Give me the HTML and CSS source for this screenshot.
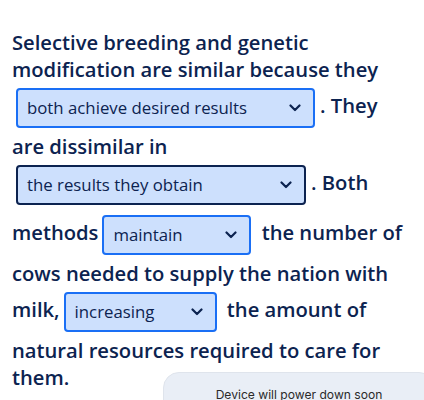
FILE: index.html
```html
<!DOCTYPE html>
<html>
<head>
<meta charset="utf-8">
<link rel="stylesheet" href="styles.css">
</head>
<body>
<p class="passage">Selective breeding and genetic modification are similar because they<wbr><span class="select sel-1 active"><span class="val">both achieve desired results</span><svg class="chev" viewBox="0 0 12 8"><path d="M1.5 1.5 L6 6 L10.5 1.5" /></svg></span>. They are dissimilar in<wbr><span class="select sel-2 dark"><span class="val">the results they obtain</span><svg class="chev" viewBox="0 0 12 8"><path d="M1.5 1.5 L6 6 L10.5 1.5" /></svg></span>. Both methods<wbr><span class="select sel-3 active"><span class="val">maintain</span><svg class="chev" viewBox="0 0 12 8"><path d="M1.5 1.5 L6 6 L10.5 1.5" /></svg></span> the number of cows needed to supply the nation with milk,<wbr><span class="select sel-4 active"><span class="val">increasing</span><svg class="chev" viewBox="0 0 12 8"><path d="M1.5 1.5 L6 6 L10.5 1.5" /></svg></span> the amount of natural resources required to care for them.</p>
<div class="toast">Device will power down soon</div>
</body>
</html>
```
FILE: styles.css
```css
html, body {
  margin: 0;
  padding: 0;
  width: 424px;
  height: 400px;
  overflow: hidden;
  background: #ffffff;
}
body {
  position: relative;
}
.passage {
  margin: 0;
  padding: 29px 12px 0 12px;
  font-family: "Open Sans", "Noto Sans", sans-serif;
  font-weight: 600;
  font-size: 20.2px;
  line-height: 27px;
  color: #0c2350;
}
.select {
  display: inline-flex;
  align-items: center;
  justify-content: space-between;
  box-sizing: border-box;
  height: 40px;
  margin: 5px 5px 5px 4px;
  padding: 0 12px 0 9px;
  vertical-align: middle;
  background: #cde0fd;
  border: 2px solid #1a6ff5;
  border-radius: 4px;
  font-family: "Open Sans", "Noto Sans", sans-serif;
  font-weight: 500;
  font-size: 16.8px;
  line-height: 20px;
  color: #0c2350;
}
.select.dark {
  border-color: #0c2350;
}
.sel-1 { width: 299px; }
.sel-2 { width: 290px; }
.sel-3 { width: 149px; }
.sel-4 { width: 153px; }
.chev {
  width: 12px;
  height: 8px;
  fill: none;
  stroke: #0c2350;
  stroke-width: 2.2;
  stroke-linecap: round;
  stroke-linejoin: round;
}
.toast {
  position: absolute;
  left: 163px;
  top: 372px;
  width: 272px;
  height: 60px;
  box-sizing: border-box;
  padding-top: 14px;
  background: #e9eef6;
  border: 1px solid #dfe4ec;
  border-radius: 16px;
  text-align: center;
  font-family: "Inter", "Roboto", sans-serif;
  font-size: 12.1px;
  color: #2a2a2a;
}
```
